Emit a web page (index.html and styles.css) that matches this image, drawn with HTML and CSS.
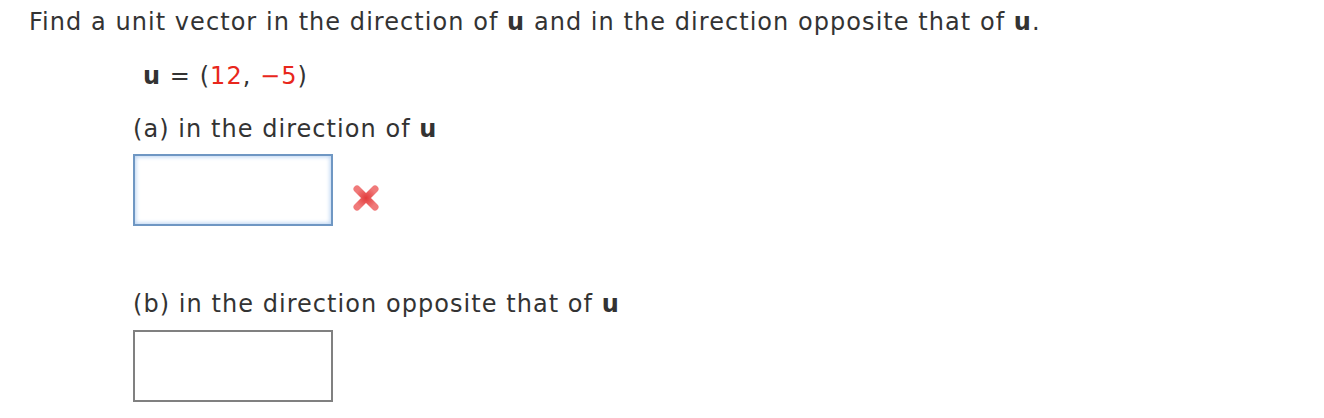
FILE: index.html
```html
<!DOCTYPE html>
<html>
<head>
<meta charset="utf-8">
<link rel="stylesheet" href="styles.css">
</head>
<body>
<div class="page">
  <p class="line question">Find a unit vector in the direction of <b>u</b> and in the direction opposite that of <b>u</b>.</p>
  <div class="parts">
    <p class="line given"><b>u</b> = (<span class="num">12</span>, <span class="num">−5</span>)</p>
    <p class="line label-a">(a) in the direction of <b>u</b></p>
    <div class="answer-row">
      <div class="answer answer-wrong"></div>
      <svg class="xmark" width="28" height="28" viewBox="0 0 28 28" aria-hidden="true">
        <defs>
          <radialGradient id="xg" cx="50%" cy="50%" r="60%">
            <stop offset="0" stop-color="#e23b3b"/>
            <stop offset="1" stop-color="#f07a7a"/>
          </radialGradient>
        </defs>
        <path d="M5 5 L23 23 M23 5 L5 23" stroke="url(#xg)" stroke-width="7" stroke-linecap="round" fill="none"/>
      </svg>
    </div>
    <p class="line label-b">(b) in the direction opposite that of <b>u</b></p>
    <div class="answer-row">
      <div class="answer answer-empty"></div>
    </div>
  </div>
</div>
</body>
</html>
```
FILE: styles.css
```css
html, body {
  margin: 0;
  padding: 0;
  background: #ffffff;
}
.page {
  padding: 7px 0 0 29px;
  font-family: "DejaVu Sans", Verdana, sans-serif;
  font-size: 24px;
  letter-spacing: 1.05px;
  color: #333333;
}
.line {
  margin: 0;
  line-height: 30px;
  white-space: nowrap;
}
.line b {
  font-weight: bold;
}
.parts {
  padding-left: 104px;
}
.given {
  margin-top: 24px;
  padding-left: 10px;
}
.num {
  color: #e8271c;
}
.label-a {
  margin-top: 23px;
}
.answer-row {
  display: flex;
  align-items: center;
  gap: 19px;
  margin-top: 10px;
}
.answer {
  box-sizing: border-box;
  width: 200px;
  height: 72px;
  background: #ffffff;
}
.answer-wrong {
  border: 2px solid #6f97c3;
  box-shadow: inset 0 0 4px 1px #b9d3f2;
}
.answer-empty {
  border: 2px solid #808080;
}
.xmark {
  margin-top: 16px;
}
.label-b {
  margin-top: 63px;
}
.label-b + .answer-row {
  margin-top: 11px;
}
```
